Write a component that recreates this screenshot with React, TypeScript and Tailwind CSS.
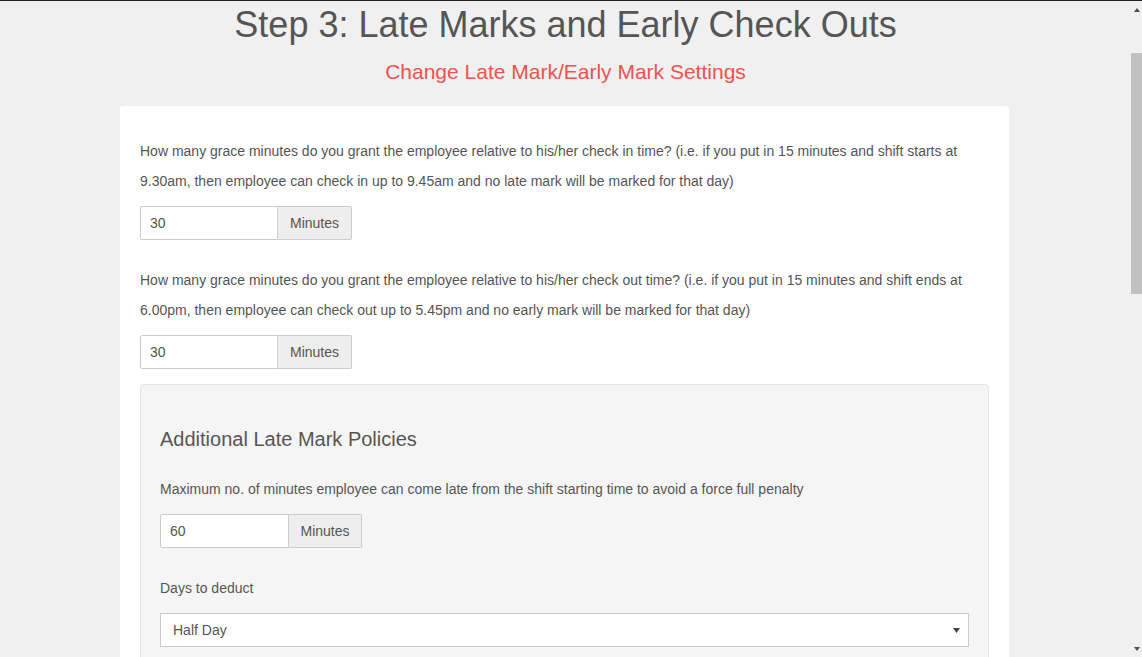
import React from "react"

function MinutesInput({ value, inputWidth, addonWidth }: { value: string; inputWidth: string; addonWidth: string }) {
  return (
    <div className="flex h-[34px]">
      <div
        className={`${inputWidth} flex items-center border border-[#cccccc] bg-white px-[9px] text-[14px] text-[#555555] rounded-l-[2px]`}
      >
        {value}
      </div>
      <div
        className={`${addonWidth} flex items-center justify-center border border-l-0 border-[#cccccc] bg-[#eeeeee] text-[14px] text-[#555555] rounded-r-[2px]`}
      >
        Minutes
      </div>
    </div>
  )
}

export default function App() {
  return (
    <div
      className="flex h-[657px] overflow-hidden border-t border-[#222222] bg-[#f0f0f0] text-[#555555]"
      style={{ fontFamily: '"Liberation Sans", Arial, sans-serif' }}
    >
      <div className="flex-1">
        <h1 className="mt-[2px] text-center text-[36px] leading-[44px] text-[#555555]">
          Step 3: Late Marks and Early Check Outs
        </h1>
        <h4 className="mt-[13px] text-center text-[21px] leading-[24px] text-[#ef5350]">
          Change Late Mark/Early Mark Settings
        </h4>

        <div className="ml-[120px] mt-[22px] w-[889px] rounded-t-[3px] bg-white px-[20px] pt-[30px]">
          <p className="text-[14px] leading-[30px]">
            How many grace minutes do you grant the employee relative to his/her check in time? (i.e. if you put in 15
            minutes and shift starts at 9.30am, then employee can check in up to 9.45am and no late mark will be marked
            for that day)
          </p>
          <div className="mt-[10px]">
            <MinutesInput value="30" inputWidth="w-[138px]" addonWidth="w-[74px]" />
          </div>

          <p className="mt-[25px] text-[14px] leading-[30px]">
            How many grace minutes do you grant the employee relative to his/her check out time? (i.e. if you put in 15
            minutes and shift ends at 6.00pm, then employee can check out up to 5.45pm and no early mark will be marked
            for that day)
          </p>
          <div className="mt-[10px]">
            <MinutesInput value="30" inputWidth="w-[138px]" addonWidth="w-[74px]" />
          </div>

          <div className="mt-[15px] h-[400px] rounded-[4px] border border-[#e3e3e3] bg-[#f5f5f5] px-[19px] pt-[43px]">
            <h3 className="text-[20px] leading-[22px] text-[#555555]">Additional Late Mark Policies</h3>
            <p className="mt-[29px] text-[14px] leading-[20px]">
              Maximum no. of minutes employee can come late from the shift starting time to avoid a force full penalty
            </p>
            <div className="mt-[15px]">
              <MinutesInput value="60" inputWidth="w-[129px]" addonWidth="w-[73px]" />
            </div>
            <p className="mt-[30px] text-[14px] leading-[20px]">Days to deduct</p>
            <div className="mt-[15px] flex h-[34px] items-center justify-between border border-[#cccccc] bg-white pl-[12px] pr-[7px] text-[14px] text-[#555555]">
              <span>Half Day</span>
              <svg width="8" height="6" viewBox="0 0 8 6" className="mt-[1px]">
                <path d="M0 0 H7 L3.5 5 Z" fill="#444444" />
              </svg>
            </div>
          </div>
        </div>
      </div>

      {/* scrollbar */}
      <div className="flex w-[11px] flex-col items-center bg-[#f0f0f0]">
        <svg width="8" height="5" viewBox="0 0 8 5" className="mt-[7px]">
          <path d="M4 0 L7 4 H1 Z" fill="#505050" />
        </svg>
        <div className="mt-[40px] h-[241px] w-[11px] bg-[#c1c1c1]" />
        <div className="flex-1" />
        <svg width="8" height="5" viewBox="0 0 8 5" className="mb-[5px]">
          <path d="M1 0 H7 L4 4 Z" fill="#505050" />
        </svg>
      </div>
    </div>
  )
}
